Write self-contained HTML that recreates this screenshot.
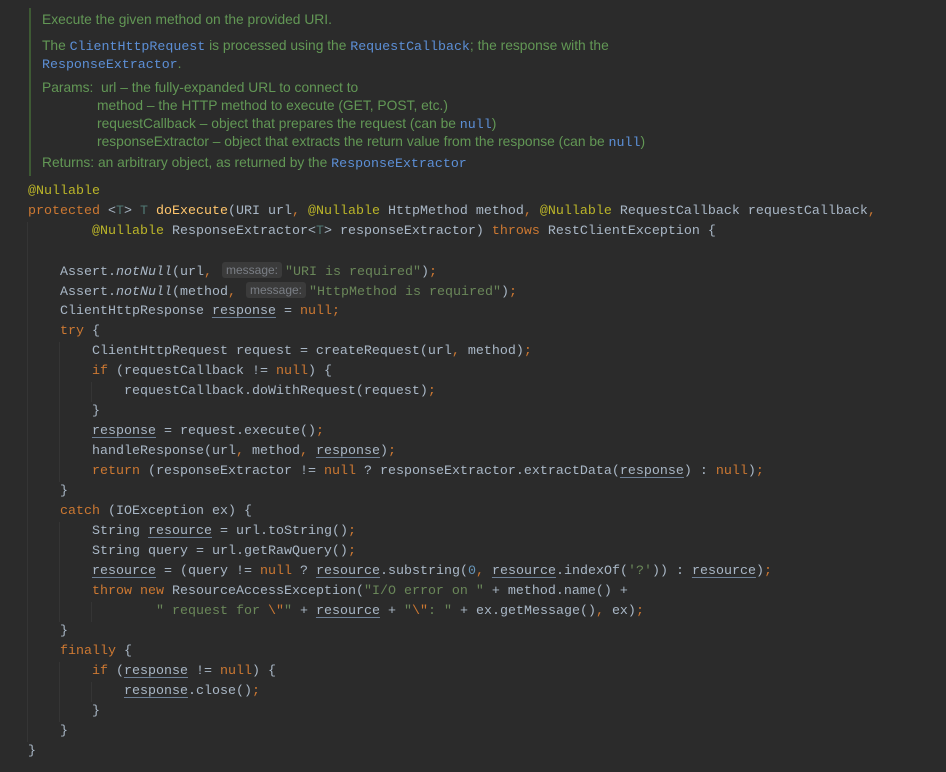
<!DOCTYPE html>
<html><head><meta charset="utf-8"><style>
html,body{margin:0;padding:0;background:#2b2b2b;width:946px;height:772px;overflow:hidden}
.doc{position:absolute;left:29px;top:8px;width:900px;height:168px;border-left:2px solid #3e5a34;font-family:"Liberation Sans",sans-serif;font-size:13.8px;color:#629755}
.doc div{position:absolute;left:11px;white-space:pre}
.doc .c{font-family:"Liberation Mono",monospace;color:#5c8fd6;font-size:13.3px}
.doc .ind{left:66px}
.code{position:absolute;left:28px;top:182px;font-family:"Liberation Mono",monospace;font-size:13.33px;color:#a9b7c6}
.code div{height:20px;line-height:20px;white-space:pre}
.k{color:#cc7832}.a{color:#bbb529}.s{color:#6a8759}.m{color:#ffc66d}.t{color:#507874}.n{color:#6897bb}
.i{font-style:italic}
.u{text-decoration:underline;text-decoration-color:#6d7f95;text-underline-offset:3px}
.h{display:inline-block;background:#3b3b3b;color:#7a7e85;font-family:"Liberation Sans",sans-serif;font-size:12px;line-height:16px;padding:0 4px;border-radius:3px;margin:0 3px 0 2px;vertical-align:1px}
.g{position:absolute;width:1px;background:#353535}
</style></head><body>
<div class="doc">
<div style="top:4px">Execute the given method on the provided URI.</div>
<div style="top:30px">The <span class="c">ClientHttpRequest</span> is processed using the <span class="c">RequestCallback</span>; the response with the</div>
<div style="top:48px"><span class="c">ResponseExtractor</span>.</div>
<div style="top:72px">Params:  url – the fully-expanded URL to connect to</div>
<div class="ind" style="top:90px">method – the HTTP method to execute (GET, POST, etc.)</div>
<div class="ind" style="top:108px">requestCallback – object that prepares the request (can be <span class="c">null</span>)</div>
<div class="ind" style="top:126px">responseExtractor – object that extracts the return value from the response (can be <span class="c">null</span>)</div>
<div style="top:147px">Returns: an arbitrary object, as returned by the <span class="c">ResponseExtractor</span></div>
</div>
<div class="g" style="left:27px;top:222px;height:520px"></div>
<div class="g" style="left:59px;top:342px;height:140px"></div>
<div class="g" style="left:59px;top:522px;height:100px"></div>
<div class="g" style="left:59px;top:662px;height:60px"></div>
<div class="g" style="left:91px;top:382px;height:20px"></div>
<div class="g" style="left:91px;top:602px;height:20px"></div>
<div class="g" style="left:91px;top:682px;height:20px"></div>
<div class="code">
<div><span class="a">@Nullable</span></div>
<div><span class="k">protected </span>&lt;<span class="t">T</span>&gt; <span class="t">T</span> <span class="m">doExecute</span>(URI url<span class="k">, </span><span class="a">@Nullable</span> HttpMethod method<span class="k">, </span><span class="a">@Nullable</span> RequestCallback requestCallback<span class="k">,</span></div>
<div>        <span class="a">@Nullable</span> ResponseExtractor&lt;<span class="t">T</span>&gt; responseExtractor) <span class="k">throws</span> RestClientException {</div>
<div> </div>
<div>    Assert.<span class="i">notNull</span>(url<span class="k">,</span> <span class="h">message:</span><span class="s">"URI is required"</span>)<span class="k">;</span></div>
<div>    Assert.<span class="i">notNull</span>(method<span class="k">,</span> <span class="h">message:</span><span class="s">"HttpMethod is required"</span>)<span class="k">;</span></div>
<div>    ClientHttpResponse <span class="u">response</span> = <span class="k">null;</span></div>
<div>    <span class="k">try</span> {</div>
<div>        ClientHttpRequest request = createRequest(url<span class="k">, </span>method)<span class="k">;</span></div>
<div>        <span class="k">if</span> (requestCallback != <span class="k">null</span>) {</div>
<div>            requestCallback.doWithRequest(request)<span class="k">;</span></div>
<div>        }</div>
<div>        <span class="u">response</span> = request.execute()<span class="k">;</span></div>
<div>        handleResponse(url<span class="k">, </span>method<span class="k">, </span><span class="u">response</span>)<span class="k">;</span></div>
<div>        <span class="k">return</span> (responseExtractor != <span class="k">null</span> ? responseExtractor.extractData(<span class="u">response</span>) : <span class="k">null</span>)<span class="k">;</span></div>
<div>    }</div>
<div>    <span class="k">catch</span> (IOException ex) {</div>
<div>        String <span class="u">resource</span> = url.toString()<span class="k">;</span></div>
<div>        String query = url.getRawQuery()<span class="k">;</span></div>
<div>        <span class="u">resource</span> = (query != <span class="k">null</span> ? <span class="u">resource</span>.substring(<span class="n">0</span><span class="k">, </span><span class="u">resource</span>.indexOf(<span class="s">'?'</span>)) : <span class="u">resource</span>)<span class="k">;</span></div>
<div>        <span class="k">throw new</span> ResourceAccessException(<span class="s">"I/O error on "</span> + method.name() +</div>
<div>                <span class="s">" request for </span><span class="k">\"</span><span class="s">"</span> + <span class="u">resource</span> + <span class="s">"</span><span class="k">\"</span><span class="s">: "</span> + ex.getMessage()<span class="k">, </span>ex)<span class="k">;</span></div>
<div>    }</div>
<div>    <span class="k">finally</span> {</div>
<div>        <span class="k">if</span> (<span class="u">response</span> != <span class="k">null</span>) {</div>
<div>            <span class="u">response</span>.close()<span class="k">;</span></div>
<div>        }</div>
<div>    }</div>
<div>}</div>
</div>
</body></html>
